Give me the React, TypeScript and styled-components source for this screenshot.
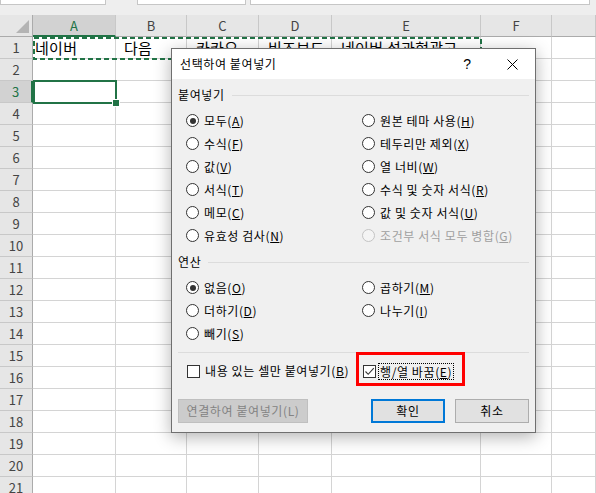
import React from 'react';
import styled, { createGlobalStyle, css } from 'styled-components';

const GREEN = '#217346';
const FONT = '"Noto Sans CJK KR", "Noto Sans", sans-serif';

const GlobalStyle = createGlobalStyle`
  html, body {
    margin: 0;
    padding: 0;
  }
  body {
    width: 596px;
    height: 493px;
    overflow: hidden;
    background: #ffffff;
    font-family: ${FONT};
  }
`;

const COLUMNS = ['A', 'B', 'C', 'D', 'E', 'F', ''];
const ROW_COUNT = 21;

const ROW_ONE = [
  { text: '네이버', indent: 2 },
  { text: '다음', indent: 8 },
  { text: '카카오', indent: 9 },
  { text: '비즈보드', indent: 9 },
  { text: '네이버 성과형광고', indent: 9 },
  { text: '', indent: 0 },
  { text: '', indent: 0 },
];

const PASTE_OPTIONS = [
  { label: '모두', key: 'A', checked: true },
  { label: '원본 테마 사용', key: 'H' },
  { label: '수식', key: 'F' },
  { label: '테두리만 제외', key: 'X' },
  { label: '값', key: 'V' },
  { label: '열 너비', key: 'W' },
  { label: '서식', key: 'T' },
  { label: '수식 및 숫자 서식', key: 'R' },
  { label: '메모', key: 'C' },
  { label: '값 및 숫자 서식', key: 'U' },
  { label: '유효성 검사', key: 'N' },
  { label: '조건부 서식 모두 병합', key: 'G', disabled: true },
];

const OPERATION_OPTIONS = [
  { label: '없음', key: 'O', checked: true },
  { label: '곱하기', key: 'M' },
  { label: '더하기', key: 'D' },
  { label: '나누기', key: 'I' },
  { label: '빼기', key: 'S' },
];

const App = () => {
  return (
    <>
      <GlobalStyle />
      <Page>
        <TopStrip>
          <NameBox width={106} />
          <NameBox width={109} offset={31} />
          <NameBox width={340} offset={4} />
        </TopStrip>

        <Sheet>
          <Corner>
            <CornerTriangle />
          </Corner>
          {COLUMNS.map((col, i) => (
            <ColumnHead key={`h${i}`} selected={col === 'A'}>
              {col}
            </ColumnHead>
          ))}
          {Array.from({ length: ROW_COUNT }, (_, r) => (
            <React.Fragment key={r}>
              <RowHead selected={r === 2}>{r + 1}</RowHead>
              {COLUMNS.map((_, c) => (
                <Cell key={c} indent={r === 0 ? ROW_ONE[c].indent : 0}>
                  {r === 0 ? ROW_ONE[c].text : ''}
                </Cell>
              ))}
            </React.Fragment>
          ))}

          <Marquee width="449" height="23">
            <rect
              x="1"
              y="1"
              width="447"
              height="21"
              fill="none"
              stroke={GREEN}
              strokeWidth="2"
              strokeDasharray="5 3"
            />
          </Marquee>
          <ActiveCell>
            <FillHandle />
          </ActiveCell>
        </Sheet>

        <Dialog>
          <TitleBar>
            <Title>선택하여 붙여넣기</Title>
            <CaptionButton>?</CaptionButton>
            <CaptionButton>
              <svg width="11" height="11" viewBox="0 0 11 11">
                <path d="M0.5 0.5 L10.5 10.5 M10.5 0.5 L0.5 10.5" stroke="#000" strokeWidth="1" />
              </svg>
            </CaptionButton>
          </TitleBar>

          <Body>
            <GroupHeader top={6}>붙여넣기</GroupHeader>
            <OptionGrid>
              {PASTE_OPTIONS.map((o) => (
                <Option key={o.key} disabled={o.disabled}>
                  <Radio checked={o.checked} disabled={o.disabled} />
                  <span>
                    {o.label}(<u>{o.key}</u>)
                  </span>
                </Option>
              ))}
            </OptionGrid>

            <GroupHeader top={5}>연산</GroupHeader>
            <OptionGrid>
              {OPERATION_OPTIONS.map((o) => (
                <Option key={o.key}>
                  <Radio checked={o.checked} />
                  <span>
                    {o.label}(<u>{o.key}</u>)
                  </span>
                </Option>
              ))}
            </OptionGrid>

            <Separator />

            <CheckRow>
              <Option>
                <CheckBox />
                <span>
                  내용 있는 셀만 붙여넣기(<u>B</u>)
                </span>
              </Option>
              <Option gap={2}>
                <CheckBox>
                  <svg width="11" height="11" viewBox="0 0 11 11">
                    <path d="M1.5 5.5 L4.2 8.3 L9.8 2.2" fill="none" stroke="#333" strokeWidth="1.1" />
                  </svg>
                </CheckBox>
                <FocusLabel>
                  행/열 바꿈(<u>E</u>)
                </FocusLabel>
              </Option>
            </CheckRow>

            <ButtonRow>
              <Button width={130} disabled>
                연결하여 붙여넣기(L)
              </Button>
              <Spacer />
              <Button width={74} primary>
                확인
              </Button>
              <Button width={74}>취소</Button>
            </ButtonRow>
          </Body>

          <Highlight />
        </Dialog>
      </Page>
    </>
  );
};

export default App;

const Page = styled.div`
  position: relative;
  width: 596px;
  height: 493px;
  overflow: hidden;
  background: #ffffff;
`;

const TopStrip = styled.div`
  display: flex;
  align-items: flex-start;
  height: 15px;
  background: #eeeeee;
`;

const NameBox = styled.div<{ width: number; offset?: number }>`
  width: ${(p) => p.width}px;
  margin-left: ${(p) => p.offset ?? 0}px;
  height: 5px;
  box-sizing: border-box;
  background: #ffffff;
  border: 1px solid #c6c6c6;
  border-top: none;
`;

const Sheet = styled.div`
  position: relative;
  display: grid;
  grid-template-columns: 33px 83px 71px 72px 73px 149px 71px 1fr;
  grid-auto-rows: 22px;
`;

const headBase = css`
  box-sizing: border-box;
  display: flex;
  align-items: center;
  justify-content: center;
  background: #e6e6e6;
  font-family: ${FONT};
  font-size: 13px;
  color: #444444;
`;

const Corner = styled.div`
  ${headBase};
  position: relative;
  border-right: 1px solid #ababab;
  border-bottom: 1px solid #ababab;
`;

const CornerTriangle = styled.div`
  position: absolute;
  right: 3px;
  bottom: 3px;
  width: 0;
  height: 0;
  border-left: 13px solid transparent;
  border-bottom: 13px solid #b4b4b4;
`;

const ColumnHead = styled.div<{ selected?: boolean }>`
  ${headBase};
  border-right: 1px solid #c8c8c8;
  border-bottom: 1px solid #ababab;
  ${(p) =>
    p.selected &&
    css`
      background: #d2d2d2;
      color: ${GREEN};
      border-bottom: 2px solid ${GREEN};
    `}
`;

const RowHead = styled.div<{ selected?: boolean }>`
  ${headBase};
  border-bottom: 1px solid #c8c8c8;
  border-right: 1px solid #ababab;
  ${(p) =>
    p.selected &&
    css`
      background: #d2d2d2;
      color: ${GREEN};
      border-right: 2px solid ${GREEN};
    `}
`;

const Cell = styled.div<{ indent: number }>`
  box-sizing: border-box;
  border-right: 1px solid #d4d4d4;
  border-bottom: 1px solid #d4d4d4;
  padding-left: ${(p) => p.indent}px;
  font-family: ${FONT};
  font-size: 15px;
  line-height: 21px;
  letter-spacing: 0.3px;
  color: #000000;
  white-space: nowrap;
`;

const Marquee = styled.svg`
  position: absolute;
  left: 33px;
  top: 22px;
  display: block;
`;

const ActiveCell = styled.div`
  position: absolute;
  left: 33px;
  top: 65px;
  width: 84px;
  height: 24px;
  box-sizing: border-box;
  border: 2px solid ${GREEN};
`;

const FillHandle = styled.div`
  position: absolute;
  right: -5px;
  bottom: -5px;
  width: 6px;
  height: 6px;
  background: ${GREEN};
  border: 1px solid #ffffff;
`;

const Dialog = styled.div`
  position: absolute;
  left: 171px;
  top: 48px;
  width: 365px;
  height: 385px;
  box-sizing: border-box;
  display: flex;
  flex-direction: column;
  border: 1px solid #6f6f6f;
  background: #f0f0f0;
  box-shadow: 0 4px 16px rgba(0, 0, 0, 0.3);
  font-family: ${FONT};
  font-size: 12px;
  line-height: 16px;
  letter-spacing: 0.6px;
  color: #000000;
`;

const TitleBar = styled.div`
  display: flex;
  align-items: center;
  height: 30px;
  padding-left: 8px;
  background: #ffffff;
`;

const Title = styled.div`
  flex: 1;
  font-size: 12px;
`;

const CaptionButton = styled.div`
  width: 45px;
  height: 30px;
  display: flex;
  align-items: center;
  justify-content: center;
  font-family: "Liberation Sans", sans-serif;
  font-size: 14px;
`;

const Body = styled.div`
  flex: 1;
  display: flex;
  flex-direction: column;
  padding: 0 6px 9px;
`;

const GroupHeader = styled.div<{ top: number }>`
  display: flex;
  align-items: center;
  gap: 7px;
  height: 20px;
  margin-top: ${(p) => p.top}px;

  &::after {
    content: '';
    flex: 1;
    height: 1px;
    background: #dcdcdc;
  }
`;

const OptionGrid = styled.div`
  display: grid;
  grid-template-columns: 176px 1fr;
  grid-auto-rows: 23px;
  margin-top: 4px;
  padding-left: 8px;
`;

const Option = styled.div<{ disabled?: boolean; gap?: number }>`
  display: flex;
  align-items: center;
  gap: ${(p) => p.gap ?? 5}px;
  white-space: nowrap;
  color: ${(p) => (p.disabled ? '#a0a0a0' : '#000000')};
`;

const Radio = styled.span<{ checked?: boolean; disabled?: boolean }>`
  position: relative;
  flex: none;
  width: 13px;
  height: 13px;
  box-sizing: border-box;
  border-radius: 50%;
  border: 1px solid ${(p) => (p.disabled ? '#c4c4c4' : '#333333')};
  background: ${(p) => (p.disabled ? '#f4f4f4' : '#ffffff')};

  ${(p) =>
    p.checked &&
    css`
      &::after {
        content: '';
        position: absolute;
        left: 2.5px;
        top: 2.5px;
        width: 6px;
        height: 6px;
        border-radius: 50%;
        background: #333333;
      }
    `}
`;

const Separator = styled.div`
  height: 1px;
  margin-top: 7px;
  background: #dcdcdc;
`;

const CheckRow = styled.div`
  display: grid;
  grid-template-columns: 176px 1fr;
  align-items: center;
  height: 22px;
  margin-top: 7px;
  padding-left: 9px;
`;

const CheckBox = styled.span`
  flex: none;
  width: 13px;
  height: 13px;
  box-sizing: border-box;
  display: flex;
  align-items: center;
  justify-content: center;
  border: 1px solid #333333;
  background: #ffffff;
`;

const FocusLabel = styled.span`
  padding: 0 1px;
  line-height: 15px;
  border: 1px dotted #000000;
`;

const ButtonRow = styled.div`
  display: flex;
  align-items: center;
  gap: 10px;
  margin-top: 17px;
`;

const Spacer = styled.div`
  flex: 1;
`;

const Button = styled.div<{ width: number; primary?: boolean; disabled?: boolean }>`
  width: ${(p) => p.width}px;
  height: 24px;
  box-sizing: border-box;
  display: flex;
  align-items: center;
  justify-content: center;
  background: #e1e1e1;
  border: 1px solid #adadad;
  white-space: nowrap;

  ${(p) =>
    p.primary &&
    css`
      border: 2px solid #0078d7;
    `}

  ${(p) =>
    p.disabled &&
    css`
      background: #cccccc;
      border-color: #bfbfbf;
      color: #838383;
    `}
`;

const Highlight = styled.div`
  position: absolute;
  left: 184px;
  top: 303px;
  width: 109px;
  height: 34px;
  box-sizing: border-box;
  border: 3px solid #ff0000;
  pointer-events: none;
`;
